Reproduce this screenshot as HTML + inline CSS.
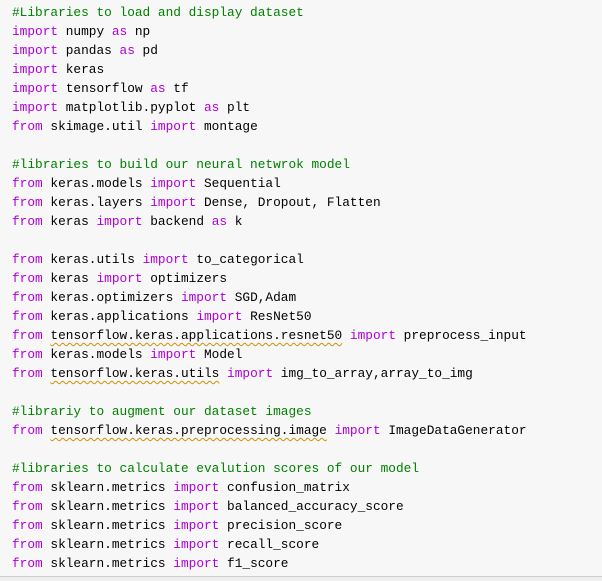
<!DOCTYPE html>
<html><head><meta charset="utf-8"><style>
html,body{margin:0;padding:0;background:#f7f7f7;width:602px;height:581px;overflow:hidden}
pre{margin:0;padding:3px 0 0 12px;font-family:"Liberation Mono",monospace;font-size:12.8px;line-height:19px;color:#000}
.k{color:#af00db}.c{color:#008000}
.u{text-decoration:underline wavy #d09000;text-decoration-thickness:1px;text-underline-offset:3px}
.bb{position:absolute;left:0;top:576px;width:602px;height:1px;background:#cfcfcf}
.bl{position:absolute;left:0;top:577px;width:602px;height:4px;background:#eeeeee}
</style></head><body>
<pre><span class="c">#Libraries to load and display dataset</span>
<span class="k">import</span> numpy <span class="k">as</span> np
<span class="k">import</span> pandas <span class="k">as</span> pd
<span class="k">import</span> keras
<span class="k">import</span> tensorflow <span class="k">as</span> tf
<span class="k">import</span> matplotlib.pyplot <span class="k">as</span> plt
<span class="k">from</span> skimage.util <span class="k">import</span> montage

<span class="c">#libraries to build our neural netwrok model</span>
<span class="k">from</span> keras.models <span class="k">import</span> Sequential
<span class="k">from</span> keras.layers <span class="k">import</span> Dense, Dropout, Flatten
<span class="k">from</span> keras <span class="k">import</span> backend <span class="k">as</span> k

<span class="k">from</span> keras.utils <span class="k">import</span> to_categorical
<span class="k">from</span> keras <span class="k">import</span> optimizers
<span class="k">from</span> keras.optimizers <span class="k">import</span> SGD,Adam
<span class="k">from</span> keras.applications <span class="k">import</span> ResNet50
<span class="k">from</span> <span class="u">tensorflow.keras.applications.resnet50</span> <span class="k">import</span> preprocess_input
<span class="k">from</span> keras.models <span class="k">import</span> Model
<span class="k">from</span> <span class="u">tensorflow.keras.utils</span> <span class="k">import</span> img_to_array,array_to_img

<span class="c">#librariy to augment our dataset images</span>
<span class="k">from</span> <span class="u">tensorflow.keras.preprocessing.image</span> <span class="k">import</span> ImageDataGenerator

<span class="c">#libraries to calculate evalution scores of our model</span>
<span class="k">from</span> sklearn.metrics <span class="k">import</span> confusion_matrix
<span class="k">from</span> sklearn.metrics <span class="k">import</span> balanced_accuracy_score
<span class="k">from</span> sklearn.metrics <span class="k">import</span> precision_score
<span class="k">from</span> sklearn.metrics <span class="k">import</span> recall_score
<span class="k">from</span> sklearn.metrics <span class="k">import</span> f1_score</pre>
<div class="bb"></div><div class="bl"></div>
</body></html>
